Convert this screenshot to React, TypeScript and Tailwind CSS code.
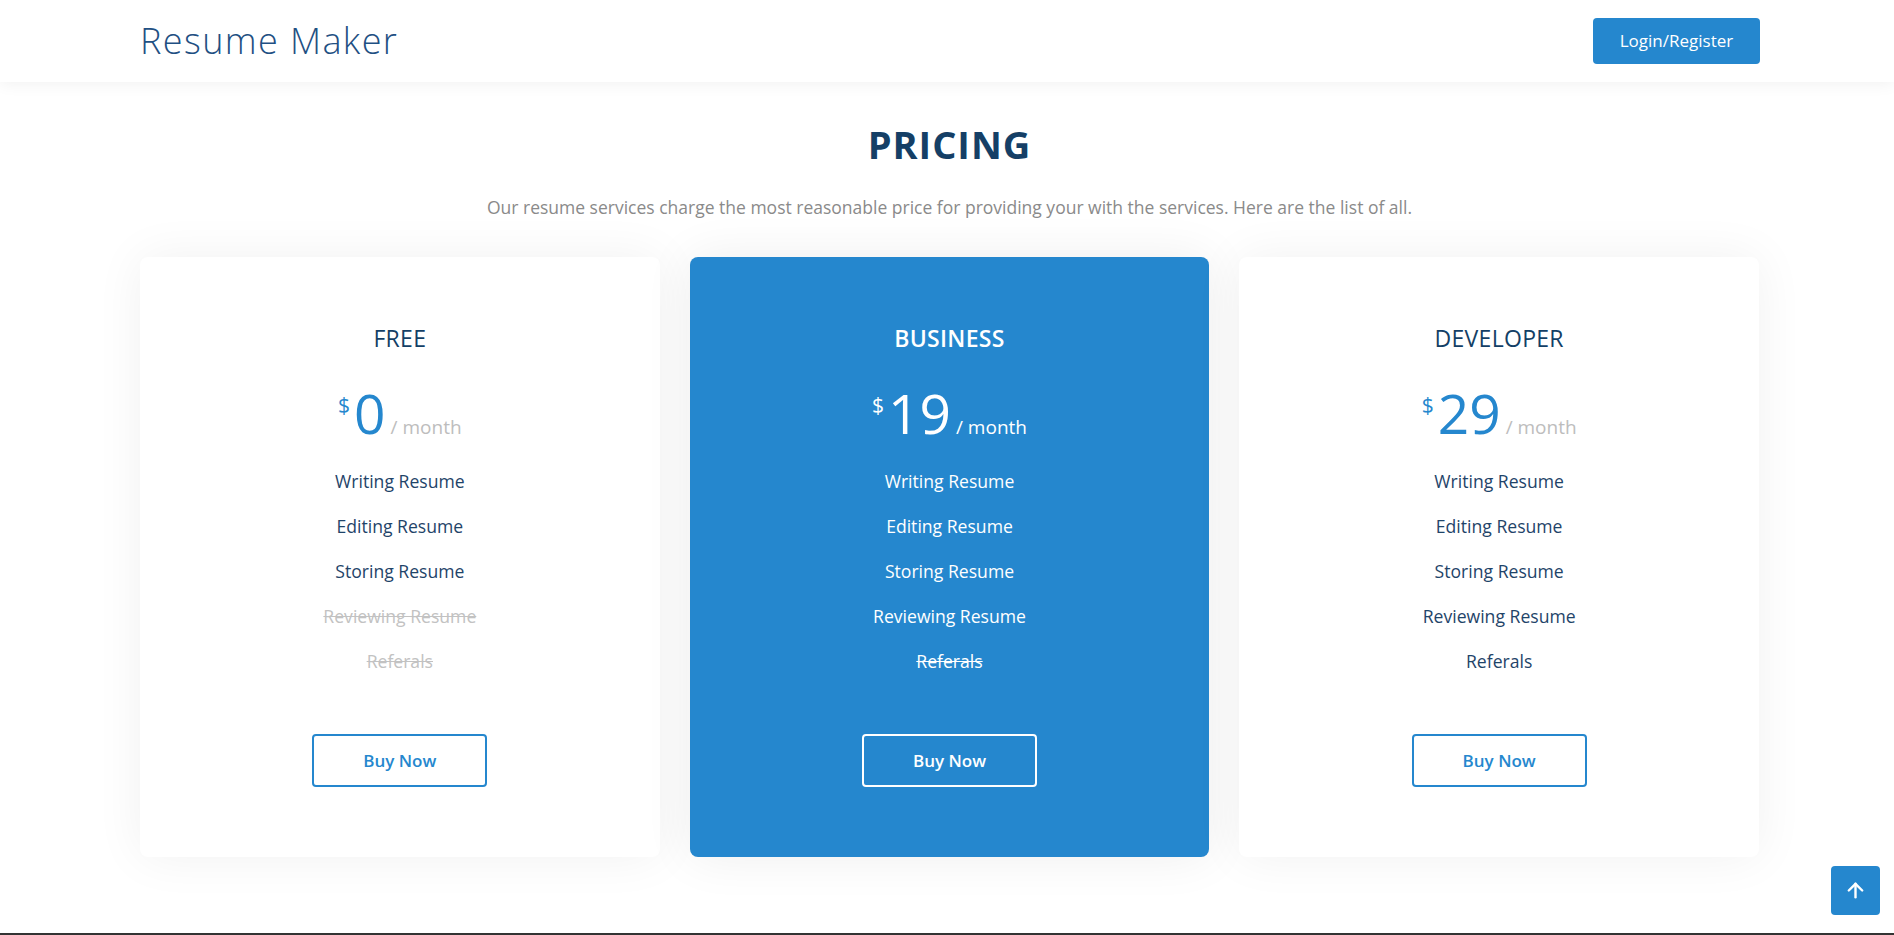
import { ArrowUp } from 'lucide-react';

type Feature = { label: string; included: boolean };

type Plan = {
  name: string;
  price: number;
  featured?: boolean;
  features: Feature[];
};

const plans: Plan[] = [
  {
    name: 'FREE',
    price: 0,
    features: [
      { label: 'Writing Resume', included: true },
      { label: 'Editing Resume', included: true },
      { label: 'Storing Resume', included: true },
      { label: 'Reviewing Resume', included: false },
      { label: 'Referals', included: false },
    ],
  },
  {
    name: 'BUSINESS',
    price: 19,
    featured: true,
    features: [
      { label: 'Writing Resume', included: true },
      { label: 'Editing Resume', included: true },
      { label: 'Storing Resume', included: true },
      { label: 'Reviewing Resume', included: true },
      { label: 'Referals', included: false },
    ],
  },
  {
    name: 'DEVELOPER',
    price: 29,
    features: [
      { label: 'Writing Resume', included: true },
      { label: 'Editing Resume', included: true },
      { label: 'Storing Resume', included: true },
      { label: 'Reviewing Resume', included: true },
      { label: 'Referals', included: true },
    ],
  },
];

function PricingCard({ plan }: { plan: Plan }) {
  const featured = plan.featured ?? false;

  return (
    <article
      className={
        featured
          ? 'flex flex-col items-center rounded-lg bg-[#2587ce] pt-[67px] pb-[70px] text-white shadow-[0_0_50px_rgba(0,0,0,0.07)]'
          : 'flex flex-col items-center rounded-lg bg-white pt-[67px] pb-[70px] shadow-[0_0_50px_rgba(0,0,0,0.06)]'
      }
    >
      <h3
        className={
          featured
            ? 'text-[23px] leading-[28px] font-semibold tracking-[0.3px] text-white'
            : 'text-[23px] leading-[28px] font-medium tracking-[0.3px] text-[#133f66]'
        }
      >
        {plan.name}
      </h3>

      <div className="mt-[33px] flex items-baseline">
        <span
          className={
            featured
              ? 'mt-[10px] mr-[4px] self-start text-[21px] leading-none text-white'
              : 'mt-[10px] mr-[4px] self-start text-[21px] leading-none text-[#2587ce]'
          }
        >
          $
        </span>
        <span
          className={
            featured
              ? 'text-[55px] leading-none text-white'
              : 'text-[55px] leading-none text-[#2587ce]'
          }
        >
          {plan.price}
        </span>
        <span
          className={
            featured
              ? 'ml-[5px] text-[19px] leading-none text-white'
              : 'ml-[5px] text-[19px] leading-none text-[#bdbdbd]'
          }
        >
          / month
        </span>
      </div>

      <ul className="mt-[19px] flex flex-col items-center">
        {plan.features.map((feature) => (
          <li
            key={feature.label}
            className={
              featured
                ? feature.included
                  ? 'text-[17.6px] leading-[45px] text-white'
                  : 'text-[17.6px] leading-[45px] text-white line-through'
                : feature.included
                  ? 'text-[17.6px] leading-[45px] text-[#1f4469]'
                  : 'text-[17.6px] leading-[45px] text-[#c2c2c2] line-through'
            }
          >
            {feature.label}
          </li>
        ))}
      </ul>

      <button
        type="button"
        className={
          featured
            ? 'mt-[50px] h-[53px] w-[175px] rounded-[4px] border-2 border-white text-[17px] font-semibold text-white'
            : 'mt-[50px] h-[53px] w-[175px] rounded-[4px] border-2 border-[#2587ce] text-[17px] font-semibold text-[#2587ce]'
        }
      >
        Buy Now
      </button>
    </article>
  );
}

export default function App() {
  return (
    <div className="relative h-[935px] overflow-hidden bg-white font-['Open_Sans',sans-serif]">
      <header className="relative z-10 h-[82px] bg-white shadow-[0_2px_15px_rgba(0,0,0,0.06)]">
        <div className="ml-[140px] flex h-full w-[1620px] items-center justify-between">
          <a href="#" className="text-[36px] leading-none font-light tracking-[1.4px] text-[#1f5083]">
            Resume Maker
          </a>
          <button
            type="button"
            className="h-[46px] w-[167px] rounded-[4px] bg-[#2587ce] text-[17px] text-white"
          >
            Login/Register
          </button>
        </div>
      </header>

      <section className="h-[851px] pt-[39px]">
        <div className="ml-[140px] w-[1619px]">
          <h2 className="text-center text-[38px] leading-[46px] font-bold tracking-[1px] text-[#153f66]">PRICING</h2>
          <p className="mt-[27px] text-center text-[17.5px] leading-[26px] text-[#8a8a8a]">
            Our resume services charge the most reasonable price for providing your with the services. Here are the
            list of all.
          </p>

          <div className="mt-[37px] grid grid-cols-3 gap-[30px]">
            {plans.map((plan) => (
              <PricingCard key={plan.name} plan={plan} />
            ))}
          </div>
        </div>
      </section>

      <footer className="h-[2px] bg-[#333]" />

      <button
        type="button"
        className="absolute right-[14px] bottom-[20px] flex h-[49px] w-[49px] items-center justify-center rounded-[4px] bg-[#2587ce] text-white"
      >
        <ArrowUp size={23} strokeWidth={2.5} />
      </button>
    </div>
  );
}
